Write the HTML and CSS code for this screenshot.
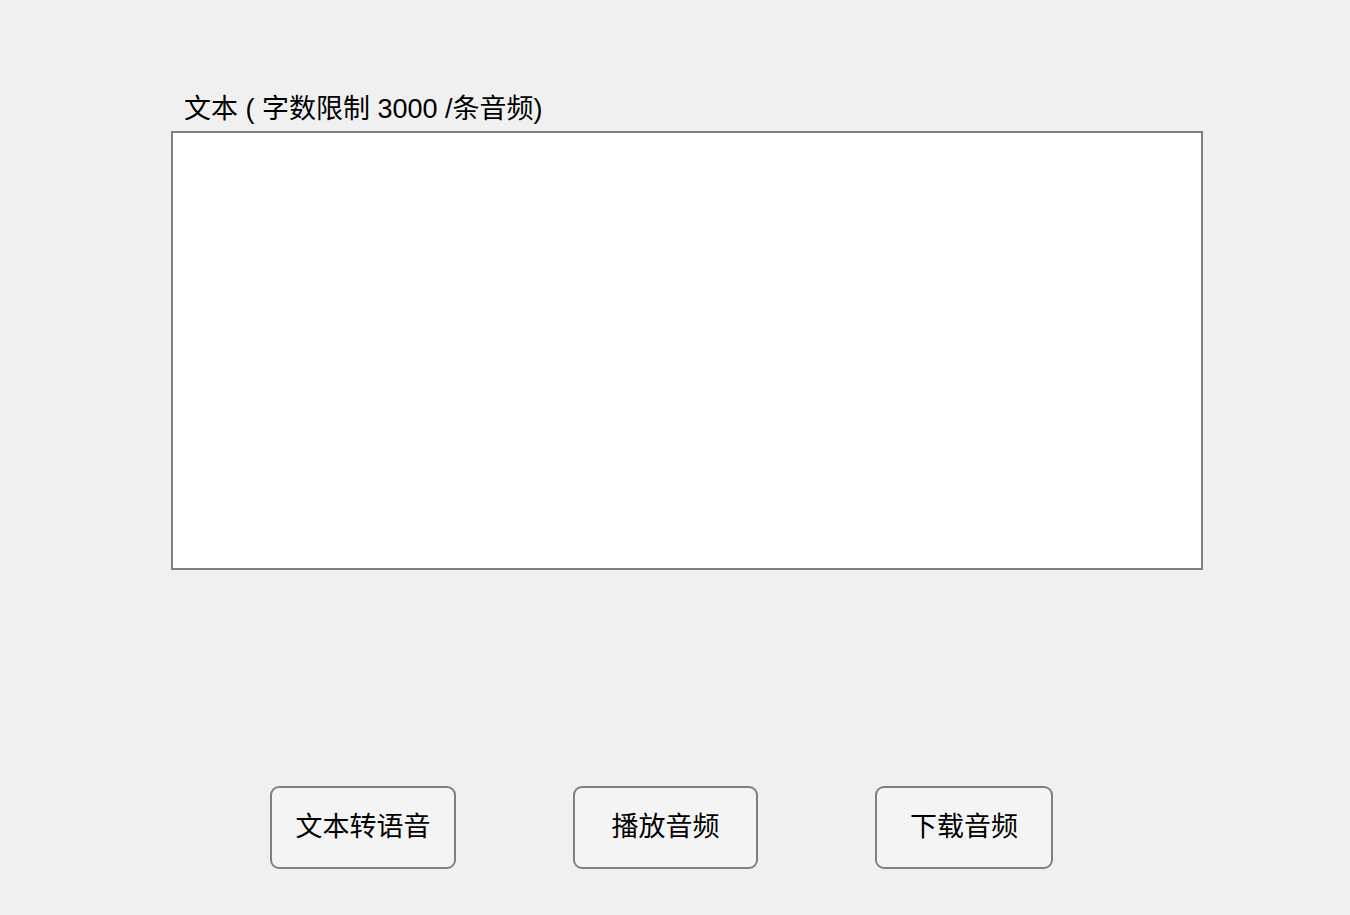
FILE: index.html
```html
<!DOCTYPE html>
<html lang="zh">
<head>
<meta charset="utf-8">
<link rel="stylesheet" href="styles.css">
</head>
<body>
<div class="page">
  <label class="label">文本 ( 字数限制 3000 /条音频)</label>
  <textarea class="text"></textarea>
  <div class="actions">
    <button class="btn btn-1">文本转语音</button>
    <button class="btn btn-2">播放音频</button>
    <button class="btn btn-3">下载音频</button>
  </div>
</div>
</body>
</html>
```
FILE: styles.css
```css
html, body {
  margin: 0;
  padding: 0;
  background: #f0f0f0;
  width: 1350px;
  height: 915px;
  overflow: hidden;
}
.page {
  display: flex;
  flex-direction: column;
  padding: 90px 0 0 171px;
  font-family: "Liberation Sans", "Noto Sans CJK SC", sans-serif;
  color: #000;
}
.label {
  display: block;
  font-size: 27px;
  line-height: 38px;
  margin-left: 13px;
  height: 41px;
}
.text {
  box-sizing: border-box;
  width: 1032px;
  height: 439px;
  border: 2px solid #808080;
  background: #fff;
  resize: none;
  margin: 0;
  padding: 0;
  outline: none;
}
.actions {
  display: flex;
  gap: 117px;
  margin-top: 216px;
  margin-left: 99px;
}
.btn {
  box-sizing: border-box;
  height: 83px;
  border: 2px solid #808080;
  border-radius: 9px;
  background: #f4f4f4;
  font-family: "Liberation Sans", "Noto Sans CJK SC", sans-serif;
  font-size: 27px;
  line-height: 1;
  color: #000;
  padding: 0 0 1px 0;
  margin: 0;
}
.btn-1 { width: 186px; }
.btn-2 { width: 185px; }
.btn-3 { width: 178px; }
```
